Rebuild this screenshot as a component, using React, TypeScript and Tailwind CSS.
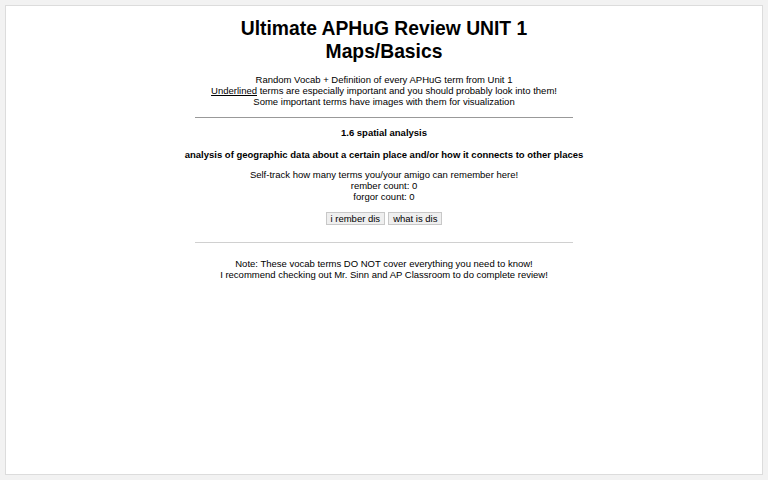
import { useState } from "react";

export default function App() {
  const [rember, setRember] = useState(0);
  const [forgor, setForgor] = useState(0);

  return (
    <div className="min-h-[480px] bg-[#f2f2f2] p-[5px] font-['Liberation_Sans',Arial,sans-serif] text-black">
      <div className="flex h-[470px] flex-col items-center border border-[#dcdcdc] bg-white text-center">
        <h1 className="mt-[11px] text-[19.3px] font-bold leading-[23px]">
          Ultimate APHuG Review UNIT 1
          <br />
          Maps/Basics
        </h1>

        <div className="mt-[11px] text-[9.5px] leading-[11px]">
          <p>Random Vocab + Definition of every APHuG term from Unit 1</p>
          <p>
            <u>Underlined</u> terms are especially important and you should
            probably look into them!
          </p>
          <p>Some important terms have images with them for visualization</p>
        </div>

        <hr className="mt-[10px] w-1/2 border-t border-[#999]" />

        <p className="mt-[9px] text-[9.5px] font-bold leading-[11px]">
          1.6 spatial analysis
        </p>
        <p className="mt-[11px] text-[9.5px] font-bold leading-[11px]">
          analysis of geographic data about a certain place and/or how it
          connects to other places
        </p>

        <div className="mt-[9px] text-[9.5px] leading-[11px]">
          <p>Self-track how many terms you/your amigo can remember here!</p>
          <p>rember count: {rember}</p>
          <p>forgor count: {forgor}</p>
        </div>

        <div className="mt-[10px] flex gap-[3px]">
          <button
            onClick={() => setRember(rember + 1)}
            className="border border-[#c8c8c8] bg-[#efefef] px-[4px] text-[9.5px] leading-[11px]"
          >
            i rember dis
          </button>
          <button
            onClick={() => setForgor(forgor + 1)}
            className="border border-[#c8c8c8] bg-[#efefef] px-[4px] text-[9.5px] leading-[11px]"
          >
            what is dis
          </button>
        </div>

        <hr className="mt-[17px] w-1/2 border-t border-[#d0d0d0]" />

        <div className="mt-[15px] text-[9.5px] leading-[11px]">
          <p>Note: These vocab terms DO NOT cover everything you need to know!</p>
          <p>
            I recommend checking out Mr. Sinn and AP Classroom to do complete
            review!
          </p>
        </div>
      </div>
    </div>
  );
}
